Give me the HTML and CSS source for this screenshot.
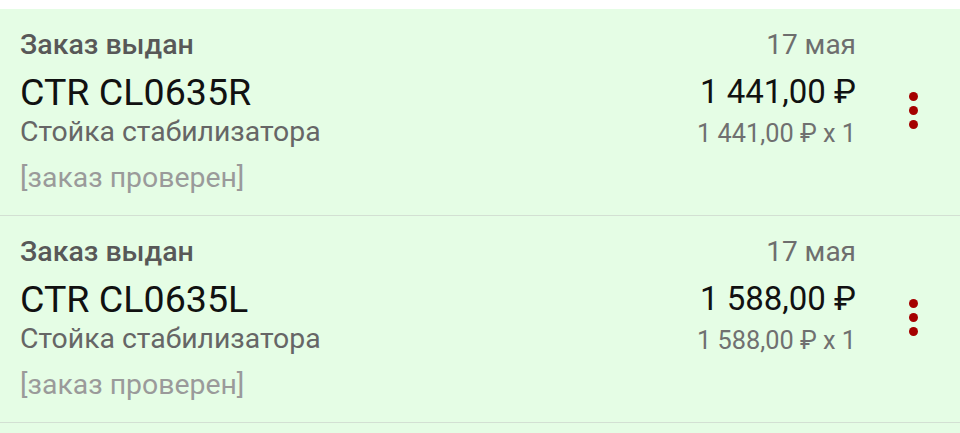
FILE: index.html
```html
<!DOCTYPE html>
<html lang="ru">
<head>
<meta charset="utf-8">
<link rel="stylesheet" href="styles.css">
</head>
<body>
<div class="list">
  <div class="card">
    <div class="info">
      <div class="state">Заказ выдан</div>
      <div class="name">CTR CL0635R</div>
      <div class="desc">Стойка стабилизатора</div>
      <div class="status">[заказ проверен]</div>
    </div>
    <div class="prices">
      <div class="date">17 мая</div>
      <div class="total">1 441,00 ₽</div>
      <div class="unit">1 441,00 ₽ x 1</div>
    </div>
    <div class="menu"><span class="dot"></span><span class="dot"></span><span class="dot"></span></div>
  </div>
  <div class="card">
    <div class="info">
      <div class="state">Заказ выдан</div>
      <div class="name">CTR CL0635L</div>
      <div class="desc">Стойка стабилизатора</div>
      <div class="status">[заказ проверен]</div>
    </div>
    <div class="prices">
      <div class="date">17 мая</div>
      <div class="total">1 588,00 ₽</div>
      <div class="unit">1 588,00 ₽ x 1</div>
    </div>
    <div class="menu"><span class="dot"></span><span class="dot"></span><span class="dot"></span></div>
  </div>
  <div class="tail"></div>
</div>
</body>
</html>
```
FILE: styles.css
```css
html, body {
  margin: 0;
  padding: 0;
  background: #ffffff;
  font-family: Roboto, "Noto Sans", sans-serif;
}
.list {
  margin-top: 9px;
  background: #e5fde5;
  height: 424px;
}
.card {
  display: flex;
  height: 206px;
  box-sizing: content-box;
  padding: 0 27px 0 20px;
  border-bottom: 1px solid #d3e0d3;
}
.info {
  flex: 1;
  padding-top: 16px;
}
.state {
  font-size: 28.5px;
  line-height: 40px;
  font-weight: 500;
  color: #585858;
}
.name {
  font-size: 37.6px;
  line-height: 54px;
  color: #111111;
}
.desc {
  font-size: 28.4px;
  line-height: 26px;
  color: #666666;
}
.status {
  margin-top: 13px;
  font-size: 28.4px;
  line-height: 40px;
  color: #9a9a9a;
}
.prices {
  padding-top: 16px;
  text-align: right;
}
.date {
  font-size: 28px;
  line-height: 40px;
  color: #6e6e6e;
}
.total {
  font-size: 33px;
  line-height: 54px;
  color: #111111;
}
.unit {
  font-size: 25.3px;
  line-height: 30px;
  color: #707070;
}
.menu {
  width: 40px;
  margin-left: 37px;
  align-self: center;
  display: flex;
  flex-direction: column;
  align-items: center;
  gap: 5px;
  margin-bottom: 4px;
}
.dot {
  width: 9px;
  height: 9px;
  border-radius: 50%;
  background: #a50000;
}
```
